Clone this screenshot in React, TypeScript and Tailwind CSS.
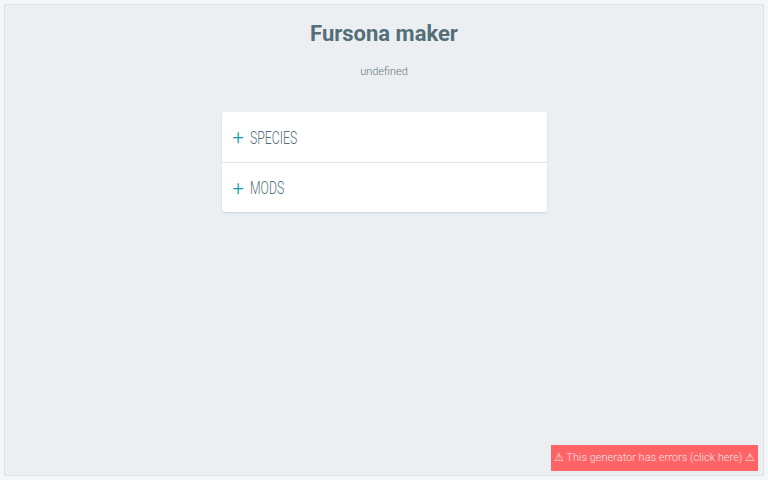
import * as React from "react";

const sections = ["Species", "Mods"];

export default function App() {
  return (
    <div className="h-[480px] w-[768px] bg-[#f5f6f7] p-[4px] font-['Roboto',sans-serif]">
      <div className="relative flex h-full flex-col items-center border border-[#dfe2e5] bg-[#ebeff2]">
        <h1 className="mt-[13px] text-[22px] font-bold leading-[32px] text-[#546e7a]">
          Fursona maker
        </h1>
        <p className="mt-[15px] text-[11px] font-light leading-[14px] text-[#66767f]">undefined</p>

        <div className="mt-[33px] w-[325px] rounded-[3px] bg-white shadow-[0_1px_2px_rgba(0,0,0,0.12)]">
          {sections.map((s, i) => (
            <div
              key={s}
              className={
                "flex h-[50px] items-center gap-[6px] px-[11px] " +
                (i > 0 ? "border-t border-[#dfe3e6]" : "")
              }
            >
              <span className="text-[20px] font-light leading-none text-[#0f9aa8]">+</span>
              <span className="origin-left scale-x-[0.68] text-[18px] font-light uppercase text-[#546e7a]">
                {s}
              </span>
            </div>
          ))}
        </div>

        <button className="absolute bottom-[4px] right-[5px] h-[26px] w-[207px] whitespace-nowrap bg-[#fe6366] text-[11px] font-light text-[#ffe4e4]">
          ⚠ This generator has errors (click here) ⚠
        </button>
      </div>
    </div>
  );
}
